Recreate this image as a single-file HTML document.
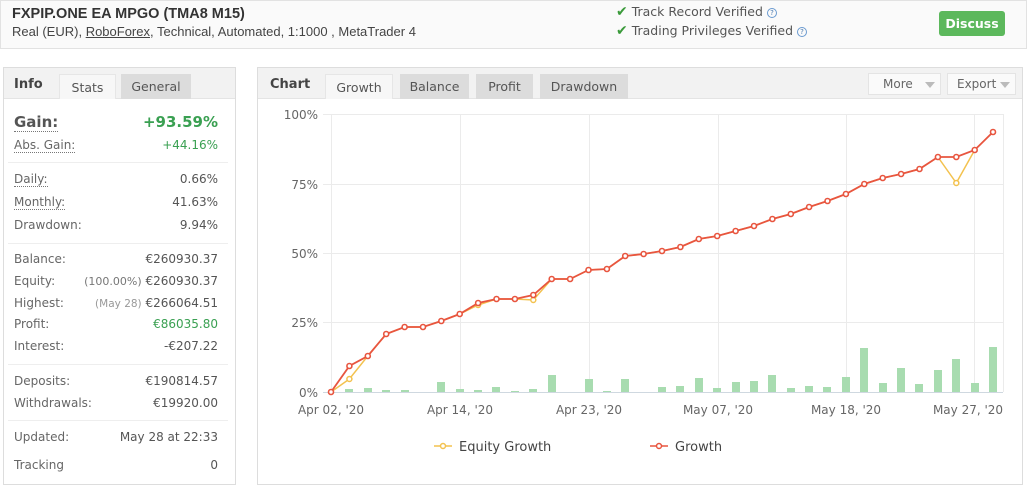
<!DOCTYPE html>
<html><head><meta charset="utf-8"><style>
*{margin:0;padding:0;box-sizing:border-box}
body{width:1030px;height:485px;background:#fff;font-family:"DejaVu Sans","Liberation Sans",sans-serif;color:#555;position:relative;overflow:hidden;font-size:12px}
.a{position:absolute;white-space:nowrap}
.hdr{left:0;top:0;width:1027px;height:49px;border:1px solid #e2e2e2;background:#fafafa}
.panel{border:1px solid #ddd;background:#fff}
.tabbar{background:#f2f2f2;border-bottom:1px solid #e4e4e4}
.tab{position:absolute;top:6px;height:26px;background:#dcdcdc;text-align:center;line-height:26px;font-size:12.5px;color:#555}
.tab.act{background:#f7f7f7;border:1px solid #e6e6e6;border-bottom:none}
.lab{left:14px;font-size:12px;color:#666}
.val{right:812px;font-size:12px;color:#555;text-align:right}
.sep{left:8px;width:220px;height:1px;background:#eee}
.btn{position:absolute;top:73px;height:22px;border:1px solid #e4e4e4;background:#fafafa;font-size:12px;line-height:20px;color:#666;padding-left:10px}
.btn i{position:absolute;right:5px;top:8px;width:0;height:0;border-left:5px solid transparent;border-right:5px solid transparent;border-top:6px solid #bbb}
.ck{color:#3a9a3a;font-weight:bold;font-size:14px}
.q{display:inline-block;width:10px;height:10px;border:1px solid #6a9ad0;border-radius:50%;font-size:7px;line-height:8px;text-align:center;color:#4a7ab0;vertical-align:1px}
</style></head><body>
<div class="a hdr"></div>
<div class="a" style="left:12px;top:6px;font-family:'Liberation Sans',sans-serif;font-weight:bold;font-size:14.5px;color:#333">FXPIP.ONE EA MPGO (TMA8 M15)</div>
<div class="a" style="left:12px;top:24px;font-family:'Liberation Sans',sans-serif;font-size:13px;color:#444">Real (EUR), <span style="text-decoration:underline">RoboForex</span>, Technical, Automated, 1:1000 , MetaTrader 4</div>
<div class="a" style="left:616px;top:4px;font-size:12.5px;color:#555"><span class="ck">✔</span> Track Record Verified <span class="q">?</span></div>
<div class="a" style="left:616px;top:23px;font-size:12.5px;color:#555"><span class="ck">✔</span> Trading Privileges Verified <span class="q">?</span></div>
<div class="a" style="left:939px;top:11px;width:66px;height:25px;background:#5cb85c;border-radius:3px;color:#fff;font-weight:bold;font-size:12.5px;text-align:center;line-height:25px">Discuss</div>

<div class="a panel" style="left:3px;top:67px;width:233px;height:418px"></div>
<div class="a tabbar" style="left:4px;top:68px;width:231px;height:31px"></div>
<div class="a" style="left:14px;top:77px;font-weight:bold;font-size:13px;color:#444">Info</div>
<div class="tab act" style="left:59px;width:57px;top:74px;height:25px">Stats</div>
<div class="tab" style="left:121px;width:70px;top:74px;height:25px">General</div>

<div class="a lab" style="top:113px;font-size:15px;font-weight:bold;color:#555;border-bottom:1px dotted #777">Gain:</div>
<div class="a val" style="top:113px;font-size:15px;font-weight:bold;color:#3aa052">+93.59%</div>
<div class="a lab" style="top:138px;border-bottom:1px dotted #777">Abs. Gain:</div>
<div class="a val" style="top:138px;color:#3aa052">+44.16%</div>
<div class="a sep" style="top:162px"></div>
<div class="a lab" style="top:172px;border-bottom:1px dotted #777">Daily:</div><div class="a val" style="top:172px">0.66%</div>
<div class="a lab" style="top:195px;border-bottom:1px dotted #777">Monthly:</div><div class="a val" style="top:195px">41.63%</div>
<div class="a lab" style="top:218px">Drawdown:</div><div class="a val" style="top:218px">9.94%</div>
<div class="a sep" style="top:243px"></div>
<div class="a lab" style="top:252px">Balance:</div><div class="a val" style="top:252px">€260930.37</div>
<div class="a lab" style="top:274px">Equity:</div><div class="a val" style="top:274px"><span style="font-size:11px;color:#777">(100.00%)</span> €260930.37</div>
<div class="a lab" style="top:296px">Highest:</div><div class="a val" style="top:296px"><span style="font-size:10.5px;color:#999">(May 28)</span> €266064.51</div>
<div class="a lab" style="top:317px">Profit:</div><div class="a val" style="top:317px;color:#3aa052">€86035.80</div>
<div class="a lab" style="top:339px">Interest:</div><div class="a val" style="top:339px">-€207.22</div>
<div class="a sep" style="top:364px"></div>
<div class="a lab" style="top:374px">Deposits:</div><div class="a val" style="top:374px">€190814.57</div>
<div class="a lab" style="top:396px">Withdrawals:</div><div class="a val" style="top:396px">€19920.00</div>
<div class="a sep" style="top:420px"></div>
<div class="a lab" style="top:430px">Updated:</div><div class="a val" style="top:430px">May 28 at 22:33</div>
<div class="a lab" style="top:458px">Tracking</div><div class="a val" style="top:458px">0</div>

<div class="a panel" style="left:257px;top:67px;width:766px;height:418px"></div>
<div class="a tabbar" style="left:258px;top:68px;width:764px;height:31px"></div>
<div class="a" style="left:270px;top:77px;font-weight:bold;font-size:13px;color:#444">Chart</div>
<div class="tab act" style="left:325px;width:68px;top:74px;height:25px">Growth</div>
<div class="tab" style="left:400px;width:69px;top:74px;height:25px">Balance</div>
<div class="tab" style="left:476px;width:57px;top:74px;height:25px">Profit</div>
<div class="tab" style="left:540px;width:88px;top:74px;height:25px">Drawdown</div>
<div class="btn" style="left:868px;width:73px;padding-left:14px">More<i></i></div>
<div class="btn" style="left:947px;width:69px;padding-left:9px">Export<i></i></div>

<svg class="a" style="left:0;top:0" width="1030" height="485" font-family="DejaVu Sans, Liberation Sans, sans-serif">
<g stroke="#ebebeb" stroke-width="1">
<line x1="323" y1="114.5" x2="1003" y2="114.5"/><line x1="323" y1="184.5" x2="1003" y2="184.5"/><line x1="323" y1="253.5" x2="1003" y2="253.5"/><line x1="323" y1="322.5" x2="1003" y2="322.5"/>
<line x1="331.5" y1="114" x2="331.5" y2="392"/><line x1="460.5" y1="114" x2="460.5" y2="392"/><line x1="589.5" y1="114" x2="589.5" y2="392"/><line x1="718.5" y1="114" x2="718.5" y2="392"/><line x1="846.5" y1="114" x2="846.5" y2="392"/><line x1="974.5" y1="114" x2="974.5" y2="392"/>
<line x1="1003.5" y1="114" x2="1003.5" y2="392"/>
</g>
<line x1="323" y1="392.5" x2="1003" y2="392.5" stroke="#cfd8e0"/>
<g fill="#666" font-size="12" text-anchor="end">
<text x="318" y="119">100%</text><text x="318" y="189">75%</text><text x="318" y="258">50%</text><text x="318" y="327">25%</text><text x="318" y="397">0%</text>
</g>
<g fill="#666" font-size="12" text-anchor="middle">
<text x="331" y="414">Apr 02, '20</text><text x="460" y="414">Apr 14, '20</text><text x="589" y="414">Apr 23, '20</text><text x="718" y="414">May 07, '20</text><text x="846" y="414">May 18, '20</text><text x="968" y="414">May 27, '20</text>
</g>
<g fill="#a8dcb0">
<rect x="345" y="389" width="8" height="3"/><rect x="364" y="388" width="8" height="4"/><rect x="382" y="390" width="8" height="2"/><rect x="401" y="390" width="8" height="2"/>
<rect x="437" y="382" width="8" height="10"/><rect x="456" y="389" width="8" height="3"/><rect x="474" y="390" width="8" height="2"/><rect x="492" y="387" width="8" height="5"/><rect x="511" y="391" width="8" height="1"/><rect x="529" y="389" width="8" height="3"/><rect x="548" y="375" width="8" height="17"/>
<rect x="585" y="379" width="8" height="13"/><rect x="603" y="391" width="8" height="1"/><rect x="621" y="379" width="8" height="13"/>
<rect x="658" y="387" width="8" height="5"/><rect x="676" y="386" width="8" height="6"/><rect x="695" y="378" width="8" height="14"/><rect x="713" y="388" width="8" height="4"/><rect x="732" y="382" width="8" height="10"/><rect x="750" y="381" width="8" height="11"/><rect x="768" y="375" width="8" height="17"/><rect x="787" y="388" width="8" height="4"/><rect x="805" y="386" width="8" height="6"/><rect x="823" y="387" width="8" height="5"/><rect x="842" y="377" width="8" height="15"/><rect x="860" y="348" width="8" height="44"/><rect x="879" y="383" width="8" height="9"/><rect x="897" y="368" width="8" height="24"/><rect x="915" y="384" width="8" height="8"/><rect x="934" y="370" width="8" height="22"/><rect x="952" y="359" width="8" height="33"/><rect x="971" y="383" width="8" height="9"/><rect x="989" y="347" width="8" height="45"/>
</g>
<polyline fill="none" stroke="#f3c24f" stroke-width="1.5" points="331,392 349.4,379 367.8,356 386.2,334 404.6,327 423,327 441.3,321 459.7,314 478.1,305 496.5,299 514.9,299 533.3,300 551.7,279 570.1,279 588.5,270 606.9,269 625.2,256 643.6,254 662,251 680.4,247 698.8,239 717.2,236 735.6,231 754,226 772.4,219 790.8,214 809.1,207 827.5,201 845.9,194 864.3,184 882.7,178 901.1,174 919.5,169 937.9,157 956.3,183 974.7,150"/>
<g fill="#fff" stroke="#f3c24f" stroke-width="1.5"><circle cx="349.4" cy="379" r="2.5"/><circle cx="478.1" cy="305" r="2.5"/><circle cx="533.3" cy="300" r="2.5"/><circle cx="956.3" cy="183" r="2.5"/></g>
<polyline fill="none" stroke="#e8553f" stroke-width="1.8" points="331,392 349.4,366 367.8,356 386.2,334 404.6,327 423,327 441.3,321 459.7,314 478.1,303 496.5,299 514.9,299 533.3,295 551.7,279 570.1,279 588.5,270 606.9,269 625.2,256 643.6,254 662,251 680.4,247 698.8,239 717.2,236 735.6,231 754,226 772.4,219 790.8,214 809.1,207 827.5,201 845.9,194 864.3,184 882.7,178 901.1,174 919.5,169 937.9,157 956.3,157 974.7,150 993,132"/>
<g fill="#fff" stroke="#e8553f" stroke-width="1.6">
<circle cx="331" cy="392" r="2.5"/><circle cx="349.4" cy="366" r="2.5"/><circle cx="367.8" cy="356" r="2.5"/><circle cx="386.2" cy="334" r="2.5"/><circle cx="404.6" cy="327" r="2.5"/><circle cx="423" cy="327" r="2.5"/><circle cx="441.3" cy="321" r="2.5"/><circle cx="459.7" cy="314" r="2.5"/><circle cx="478.1" cy="303" r="2.5"/><circle cx="496.5" cy="299" r="2.5"/><circle cx="514.9" cy="299" r="2.5"/><circle cx="533.3" cy="295" r="2.5"/><circle cx="551.7" cy="279" r="2.5"/><circle cx="570.1" cy="279" r="2.5"/><circle cx="588.5" cy="270" r="2.5"/><circle cx="606.9" cy="269" r="2.5"/><circle cx="625.2" cy="256" r="2.5"/><circle cx="643.6" cy="254" r="2.5"/><circle cx="662" cy="251" r="2.5"/><circle cx="680.4" cy="247" r="2.5"/><circle cx="698.8" cy="239" r="2.5"/><circle cx="717.2" cy="236" r="2.5"/><circle cx="735.6" cy="231" r="2.5"/><circle cx="754" cy="226" r="2.5"/><circle cx="772.4" cy="219" r="2.5"/><circle cx="790.8" cy="214" r="2.5"/><circle cx="809.1" cy="207" r="2.5"/><circle cx="827.5" cy="201" r="2.5"/><circle cx="845.9" cy="194" r="2.5"/><circle cx="864.3" cy="184" r="2.5"/><circle cx="882.7" cy="178" r="2.5"/><circle cx="901.1" cy="174" r="2.5"/><circle cx="919.5" cy="169" r="2.5"/><circle cx="937.9" cy="157" r="2.5"/><circle cx="956.3" cy="157" r="2.5"/><circle cx="974.7" cy="150" r="2.5"/><circle cx="993" cy="132" r="2.5"/>
</g>
<line x1="434" y1="446" x2="452" y2="446" stroke="#f3c24f" stroke-width="1.5"/><circle cx="443" cy="446" r="2.5" fill="#fff" stroke="#f3c24f" stroke-width="1.5"/>
<text x="459" y="451" font-size="13" fill="#444">Equity Growth</text>
<line x1="650" y1="446" x2="668" y2="446" stroke="#e8553f" stroke-width="1.5"/><circle cx="659" cy="446" r="2.5" fill="#fff" stroke="#e8553f" stroke-width="1.5"/>
<text x="675" y="451" font-size="13" fill="#444">Growth</text>
</svg>
</body></html>
